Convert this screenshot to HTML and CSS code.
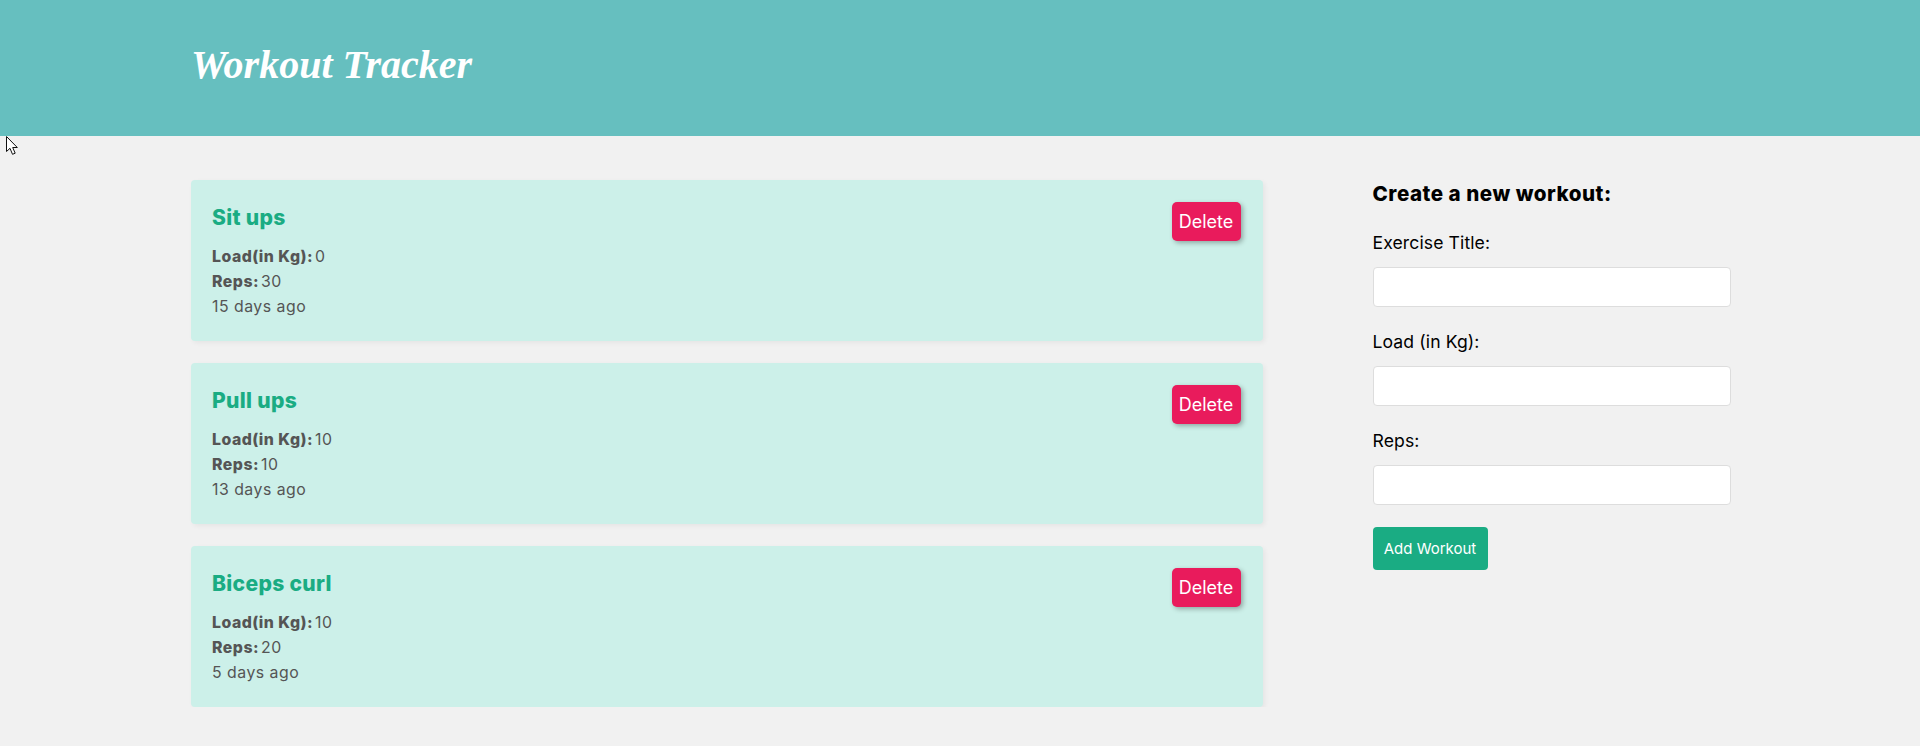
FILE: index.html
```html
<!DOCTYPE html>
<html>
<head>
  <meta charset="UTF-8">
  <title>Workout Tracker</title>
  <link rel="stylesheet" href="styles.css">
</head>
<body>
  <header class="siteHeader">
    <div class="headerInner">
      <h1 class="logo">Workout Tracker</h1>
    </div>
  </header>
  <!-- Mouse pointer caught in the screenshot -->
  <svg class="pointer" width="13" height="20" viewBox="0 0 13 20">
    <path d="M0.5 0.5V15.5L4 12.3L6.5 18.3L9.2 17.2L6.7 11.5H11.3Z" fill="#fff" stroke="#111" stroke-width="1"/>
  </svg>
  <div class="pages">
    <div class="workouts">
      <div class="workoutCard">
        <h4>Sit ups</h4>
        <p><strong>Load(in Kg):</strong> 0</p>
        <p><strong>Reps:</strong> 30</p>
        <p>15 days ago</p>
        <button class="deleteBtn">Delete</button>
      </div>
      <div class="workoutCard">
        <h4>Pull ups</h4>
        <p><strong>Load(in Kg):</strong> 10</p>
        <p><strong>Reps:</strong> 10</p>
        <p>13 days ago</p>
        <button class="deleteBtn">Delete</button>
      </div>
      <div class="workoutCard">
        <h4>Biceps curl</h4>
        <p><strong>Load(in Kg):</strong> 10</p>
        <p><strong>Reps:</strong> 20</p>
        <p>5 days ago</p>
        <button class="deleteBtn">Delete</button>
      </div>
    </div>
    <form class="createForm">
      <h3>Create a new workout:</h3>
      <label>Exercise Title:</label>
      <input type="text">
      <label>Load (in Kg):</label>
      <input type="number">
      <label>Reps:</label>
      <input type="number">
      <button type="button" class="addBtn">Add Workout</button>
    </form>
  </div>
</body>
</html>
```
FILE: styles.css
```css
body {
  margin: 0;
  background: #f1f1f1;
  font-family: Inter, "Open Sans", sans-serif;
  font-size: 17.6px;
  color: #000;
}
.siteHeader {
  background: #66bfbf;
  height: 136px;
}
.headerInner {
  margin-left: 191px;
  padding-top: 38px;
}
.logo {
  margin: 0;
  font-family: "Liberation Serif", serif;
  font-style: italic;
  font-weight: 700;
  font-size: 40px;
  line-height: 54px;
  color: #fff;
}
.pointer {
  position: absolute;
  left: 6px;
  top: 136px;
}
.pages {
  display: grid;
  grid-template-columns: 1071.5px 358px;
  gap: 110px;
  margin-left: 191px;
  padding-top: 22px;
}
/* Left column: workout cards */
.workoutCard {
  position: relative;
  height: 161px;
  box-sizing: border-box;
  margin: 22px 0;
  padding: 23px 21px 22px;
  background: #ccf0e9;
  border-radius: 4px;
  box-shadow: 2px 2px 5px rgba(0, 0, 0, 0.05);
}
.workoutCard:last-child {
  margin-bottom: 0;
}
.workoutCard h4 {
  margin: 0 0 11px;
  font-size: 21.1px;
  font-weight: 800;
  letter-spacing: 0.3px;
  line-height: 30px;
  color: #1aac83;
}
.workoutCard p {
  margin: 0;
  font-size: 15.84px;
  letter-spacing: 0.5px;
  line-height: 25.2px;
  color: #555;
}
.workoutCard strong {
  margin-right: -3px;
  font-weight: 800;
}
.deleteBtn {
  position: absolute;
  top: 22px;
  right: 22px;
  width: 69px;
  height: 39px;
  padding: 0;
  border: 0;
  border-radius: 5px;
  background: #e91b5c;
  box-shadow: 2px 2px 5px rgba(0, 0, 0, 0.3);
  color: #fff;
  font-family: inherit;
  font-size: 18px;
}
/* Right column: form */
.createForm {
  padding-top: 23px;
}
.createForm h3 {
  margin: 0 0 23px;
  font-size: 20.6px;
  font-weight: 800;
  letter-spacing: 0.5px;
  line-height: 26px;
}
.createForm label {
  display: block;
  letter-spacing: 0.1px;
  line-height: 26px;
}
.createForm input {
  display: block;
  box-sizing: border-box;
  width: 100%;
  height: 40px;
  margin: 11px 0 22px;
  border: 1px solid #ddd;
  border-radius: 4px;
  background: #fff;
}
.addBtn {
  display: block;
  width: 115px;
  height: 43px;
  padding: 0;
  border: 0;
  border-radius: 4px;
  background: #1aac83;
  color: #fff;
  font-family: inherit;
  font-size: 15px;
}
```
